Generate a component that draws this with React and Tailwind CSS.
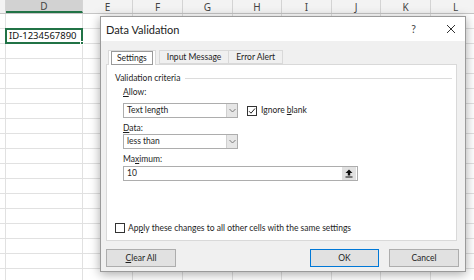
import React from "react";

const cols = [
  { name: "", w: 6 },
  { name: "D", w: 77 },
  { name: "E", w: 50 },
  { name: "F", w: 50 },
  { name: "G", w: 50 },
  { name: "H", w: 49 },
  { name: "I", w: 50 },
  { name: "J", w: 49 },
  { name: "K", w: 50 },
  { name: "L", w: 50 },
];

const rows = Array.from({ length: 18 }, (_, i) => i);

function Chevron() {
  return (
    <svg width="7" height="5" viewBox="0 0 7 5" fill="none">
      <path d="M0.5 1 L3.5 4 L6.5 1" stroke="#7a7a7a" strokeWidth="1" />
    </svg>
  );
}

function Select({ value }) {
  return (
    <div className="flex h-[15px] w-[115px] items-center border border-[#adadad] bg-white">
      <div className="flex-1 pl-[3px] leading-none text-[#1e1e1e]">{value}</div>
      <div className="flex h-full w-[11px] items-center justify-center border-l border-[#d0d0d0] bg-[#e6e6e6]">
        <Chevron />
      </div>
    </div>
  );
}

function Check({ checked }) {
  return (
    <div className="flex h-[10px] w-[10px] items-center justify-center border border-[#333] bg-white">
      {checked && (
        <svg width="8" height="8" viewBox="0 0 8 8" fill="none">
          <path d="M1 4.2 L3 6.2 L7 1.5" stroke="#222" strokeWidth="1" />
        </svg>
      )}
    </div>
  );
}

export default function App() {
  return (
    <div className="relative h-[280px] w-[474px] overflow-hidden bg-white font-['Noto_Sans',sans-serif]">
      {/* column headers */}
      <div className="flex h-[14px] border-b border-[#c6c6c6] bg-[#f3f3f3]">
        {cols.map((c) => (
          <div
            key={c.name + c.w}
            style={{ width: c.w }}
            className={
              "flex shrink-0 items-center justify-center border-r border-[#d4d4d4] text-[10px] leading-none text-[#444] " +
              (c.name === "D" ? "border-b-2 border-b-[#217346] bg-[#d2d2d2]" : "")
            }
          >
            {c.name}
          </div>
        ))}
      </div>

      {/* grid */}
      {rows.map((r) => (
        <div key={r} className="flex h-[15px] border-b border-[#e1e1e1]">
          {cols.map((c) => (
            <div key={c.name + c.w} style={{ width: c.w }} className="relative shrink-0 border-r border-[#e1e1e1]">
              {r === 1 && c.name === "D" && (
                <div className="absolute -left-px -top-px z-10 flex h-[16px] w-[78px] items-center whitespace-nowrap border-2 border-[#217346] pl-[2px] text-[9.5px] leading-none text-[#111]">
                  ID-1234567890
                  <div className="absolute -bottom-[3px] -right-[3px] h-[4px] w-[4px] border border-white bg-[#217346]" />
                </div>
              )}
            </div>
          ))}
        </div>
      ))}

      {/* dialog */}
      <div className="absolute left-[100px] top-[16px] z-20 flex h-[256px] w-[366px] flex-col border border-[#9a9a9a] bg-[#f0f0f0] font-['Lato',sans-serif] text-[#1e1e1e] shadow-[0_2px_10px_rgba(0,0,0,0.35)]">
        <div className="flex h-[24px] shrink-0 items-center bg-white pl-[5px] pr-[9px]">
          <div className="flex-1 text-[11px] leading-none text-[#222]">Data Validation</div>
          <div className="mr-[30px] text-[10.5px] leading-none text-[#444]">?</div>
          <svg width="10" height="10" viewBox="0 0 10 10">
            <path d="M1 1 L9 9 M9 1 L1 9" stroke="#333" strokeWidth="1" />
          </svg>
        </div>

        <div className="flex flex-1 flex-col px-[5px] pt-[9px]">
          {/* tabs */}
          <div className="flex h-[14px] pl-[2px] text-[8.5px] leading-none">
            <div className="relative z-10 flex h-[15px] items-center border border-b-0 border-[#d9d9d9] bg-white px-[2px]">
              <div className="border border-[#9a9a9a] px-[5px] py-[2px]">Settings</div>
            </div>
            <div className="ml-[3px] flex items-center border border-[#d9d9d9] bg-[#f0f0f0] px-[7px]">Input Message</div>
            <div className="flex items-center border border-l-0 border-[#d9d9d9] bg-[#f0f0f0] px-[7px]">Error Alert</div>
          </div>

          {/* panel */}
          <div className="flex h-[177px] w-[351px] flex-col border border-[#d9d9d9] bg-white pl-[8px] pr-[4px] text-[8.5px] leading-none">
            <div className="mt-[8px] flex h-[10px] items-center">
              <span>Validation criteria</span>
              <div className="ml-[5px] h-px flex-1 bg-[#dcdcdc]" />
            </div>

            <div className="ml-[8px] flex flex-col">
              <div className="mt-[4px] flex h-[10px] items-center">
                <span>
                  <span className="underline">A</span>llow:
                </span>
              </div>
              <div className="mt-[6px] flex items-center">
                <Select value="Text length" />
                <div className="ml-[9px] flex items-center gap-[4px]">
                  <Check checked />
                  <span>
                    Ignore <span className="underline">b</span>lank
                  </span>
                </div>
              </div>

              <div className="mt-[5px] flex h-[10px] items-center">
                <span>
                  <span className="underline">D</span>ata:
                </span>
              </div>
              <div className="mt-[1px]">
                <Select value="less than" />
              </div>

              <div className="mt-[5px] flex h-[10px] items-center">
                <span>
                  Ma<span className="underline">x</span>imum:
                </span>
              </div>
              <div className="mt-[2px] flex h-[15px] w-[235px] items-center border border-[#adadad] bg-white">
                <div className="flex-1 pl-[3px]">10</div>
                <div className="mr-px flex h-[13px] w-[14px] items-center justify-center bg-[#e1e1e1]">
                  <svg width="8" height="9" viewBox="0 0 8 9">
                    <path d="M4 0.5 L7.5 4 L5.2 4 L5.2 6.5 L2.8 6.5 L2.8 4 L0.5 4 Z" fill="#111" />
                    <rect x="0.5" y="7.5" width="7" height="1" fill="#111" />
                  </svg>
                </div>
              </div>
            </div>

            <div className="mt-[42px] flex items-center gap-[3px]">
              <div className="h-[10px] w-[10px] border border-[#333] bg-white" />
              <span>
                Ap<span className="underline">p</span>ly these changes to all other cells with the same settings
              </span>
            </div>
          </div>

          {/* buttons */}
          <div className="mt-[8px] flex text-[8.5px] leading-none">
            <div className="flex h-[18px] w-[70px] items-center justify-center border border-[#adadad] bg-[#e1e1e1]">
              <span>
                <span className="underline">C</span>lear All
              </span>
            </div>
            <div className="ml-auto flex h-[18px] w-[69px] items-center justify-center border-[1.5px] border-[#0078d7] bg-[#e1e1e1]">
              OK
            </div>
            <div className="ml-[10px] mr-[1px] flex h-[18px] w-[70px] items-center justify-center border border-[#adadad] bg-[#e1e1e1]">
              Cancel
            </div>
          </div>
        </div>
      </div>
    </div>
  );
}
